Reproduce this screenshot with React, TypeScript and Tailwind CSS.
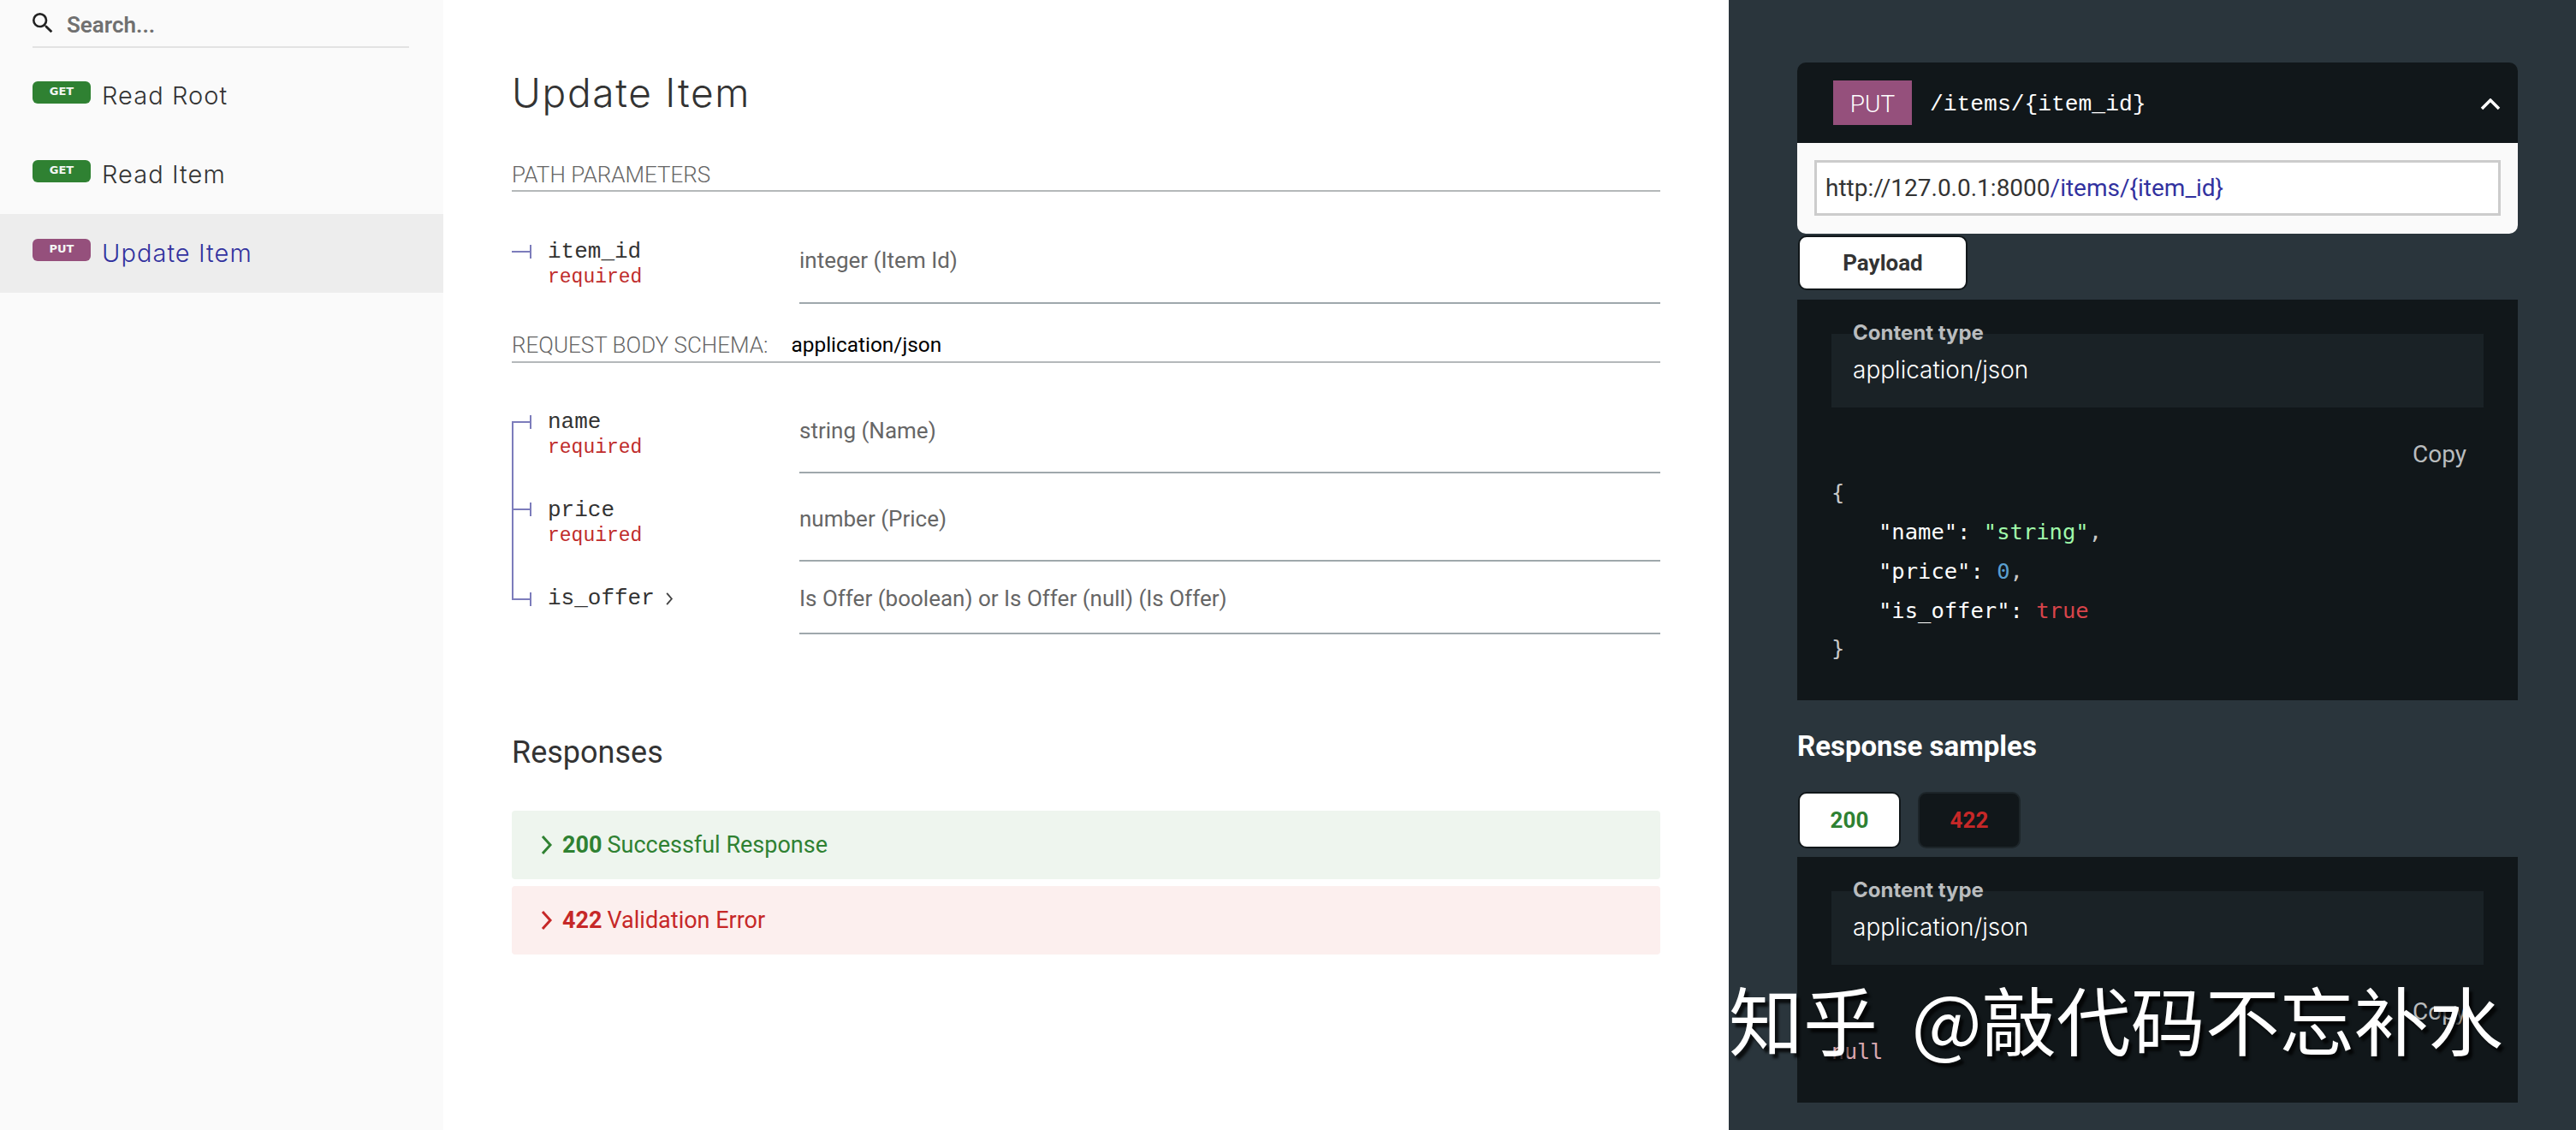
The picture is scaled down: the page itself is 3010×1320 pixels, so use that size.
const SANS = 'font-["Roboto",sans-serif]';

const NavItem = ({ method, label, active }: { method: string; label: string; active?: boolean }) => (
  <div className={`flex h-[92px] items-center pl-[38px] ${active ? 'bg-[#ededed]' : ''}`}>
    <span
      className={`mb-[8px] flex h-[26px] w-[68px] items-center justify-center rounded-[6px] pb-[2px] font-["DejaVu_Sans",sans-serif] text-[13px] font-bold text-[#f4f7f4] ${
        method === 'PUT' ? 'bg-[#95507c]' : 'bg-[#2f8132]'
      }`}
    >
      {method}
    </span>
    <span
      className={`ml-[13px] font-["Inter",sans-serif] text-[29px] font-light tracking-[1.05px] ${
        active ? 'text-[#32329f]' : 'text-[#333333]'
      }`}
    >
      {label}
    </span>
  </div>
);

const Sidebar = () => (
  <aside className="flex h-full w-[518px] shrink-0 flex-col bg-[#fafafa]">
    <div className="ml-[38px] mr-[40px] flex h-[56px] items-center border-b-2 border-[#e2e2e2]">
      <svg viewBox="0 0 24 24" className="h-[32px] w-[32px] shrink-0 -translate-x-[4px] fill-[#222222]">
        <path d="M15.5 14h-.79l-.28-.27A6.471 6.471 0 0 0 16 9.5 6.5 6.5 0 1 0 9.5 16c1.61 0 3.09-.59 4.23-1.57l.27.28v.79l5 4.99L20.49 19l-4.99-5zm-6 0C7.01 14 5 11.99 5 9.5S7.01 5 9.5 5 14 7.01 14 9.5 11.99 14 9.5 14z" />
      </svg>
      <span className={`ml-[8px] mt-[4px] ${SANS} text-[26px] font-semibold text-[#707070]`}>Search...</span>
    </div>
    <div className="mt-[10px]">
      <NavItem method="GET" label="Read Root" />
      <NavItem method="GET" label="Read Item" />
      <NavItem method="PUT" label="Update Item" active />
    </div>
  </aside>
);

type Tree = 'single' | 'first' | 'middle' | 'last';

const Connector = ({ tree, lineY }: { tree: Tree; lineY: number }) => (
  <>
    {tree !== 'single' && (
      <span
        className="absolute left-0 w-[2px] bg-[#7c7cbb]"
        style={{
          top: tree === 'first' ? lineY : 0,
          height: tree === 'middle' ? '100%' : tree === 'last' ? lineY + 2 : undefined,
          bottom: tree === 'first' ? -2 : undefined,
        }}
      />
    )}
    <span className="absolute left-0 h-[2px] w-[22px] bg-[#7c7cbb]" style={{ top: lineY }} />
    <span className="absolute left-[21px] h-[16px] w-[2px] bg-[#7c7cbb]" style={{ top: lineY - 7 }} />
  </>
);

const FieldRow = ({
  name,
  desc,
  required,
  tree,
  lineY,
  height,
  expandable,
}: {
  name: string;
  desc: string;
  required?: boolean;
  tree: Tree;
  lineY: number;
  height: number;
  expandable?: boolean;
}) => (
  <div className="flex" style={{ height }}>
    <div className="relative w-[336px] shrink-0 pl-[42px] pt-[28px] font-['Liberation_Mono',monospace]">
      <Connector tree={tree} lineY={lineY} />
      <div className="flex h-[30px] items-center text-[26px] leading-[30px] text-[#333333]">
        {name}
        {expandable && (
          <svg viewBox="0 0 10 18" className="ml-[12px] h-[17px] w-[10px] fill-none stroke-[#444444] stroke-[2]">
            <path d="M2 2l6 7-6 7" />
          </svg>
        )}
      </div>
      {required && <div className="h-[30px] text-[23px] leading-[30px] text-[#bf2b2b]">required</div>}
    </div>
    <div className={`flex-1 border-b-2 border-[#9fa8ac] ${SANS} text-[26px] leading-[30px] text-[#666666] ${expandable ? 'pt-[28px]' : 'pt-[38px]'}`}>
      {desc}
    </div>
  </div>
);

const ResponseRow = ({ code, text, tone }: { code: string; text: string; tone: 'ok' | 'err' }) => (
  <div
    className={`flex h-[80px] items-center rounded-[4px] pl-[34px] ${SANS} text-[27px] ${
      tone === 'ok' ? 'bg-[#eef5ee] text-[#2f8132]' : 'bg-[#fcefee] text-[#c62828]'
    }`}
  >
    <svg viewBox="0 0 14 24" className="mr-[11px] h-[24px] w-[14px] fill-none stroke-current stroke-[3]">
      <path d="M2 2l9 10-9 10" />
    </svg>
    <span className="font-bold">{code}</span>
    <span className="ml-[6px]">{text}</span>
  </div>
);

const Main = () => (
  <main className="h-full flex-1 pl-[80px] pr-[80px] pt-[81px]">
    <h1 className='h-[54px] font-["Inter",sans-serif] text-[46px] font-light leading-[54px] tracking-[1.7px] text-[#333333]'>Update Item</h1>
    <div className={`mt-[52px] flex h-[37px] items-start border-b-2 border-[#b4b8ba] pt-[2px] ${SANS} text-[26px] font-light leading-[30px] text-[#666666]`}>
      PATH PARAMETERS
    </div>
    <div className="mt-[27px]">
      <FieldRow name="item_id" desc="integer (Item Id)" required tree="single" lineY={42} height={104} />
    </div>
    <div className={`mt-[33px] flex h-[36px] items-start border-b-2 border-[#b4b8ba] ${SANS} text-[26px] leading-[30px]`}>
      <span className="font-light text-[#666666]">REQUEST BODY SCHEMA:</span>
      <span className="ml-[27px] text-[24.4px] text-black">application/json</span>
    </div>
    <div className="mt-[26px]">
      <FieldRow name="name" desc="string (Name)" required tree="first" lineY={42} height={103} />
      <FieldRow name="price" desc="number (Price)" required tree="middle" lineY={41} height={103} />
      <FieldRow name="is_offer" desc="Is Offer (boolean) or Is Offer (null) (Is Offer)" tree="last" lineY={43} height={85} expandable />
    </div>
    <h2 className={`mt-[118px] h-[40px] ${SANS} text-[36px] leading-[40px] text-[#333333]`}>Responses</h2>
    <div className="mt-[48px] flex flex-col gap-[8px]">
      <ResponseRow code="200" text="Successful Response" tone="ok" />
      <ResponseRow code="422" text="Validation Error" tone="err" />
    </div>
  </main>
);

const ContentType = () => (
  <div className="relative mx-[40px] h-[86px] bg-[#1a2226] pl-[25px] pt-[26px]">
    <span className='absolute left-[25px] top-[-15px] font-["Inter",sans-serif] text-[24px] font-bold leading-[28px] text-[#b9bcbe]'>
      Content type
    </span>
    <span className='font-["Inter",sans-serif] text-[28px] font-light leading-[32px] text-white'>application/json</span>
  </div>
);

const Right = () => (
  <section className="h-full w-[990px] shrink-0 bg-[#2a353c] pl-[80px] pr-[68px] pt-[73px]">
    <div className="overflow-hidden rounded-[10px]">
      <div className="flex h-[94px] items-center bg-[#11171a] pl-[42px] pr-[20px]">
        <span className={`flex h-[52px] w-[92px] items-center justify-center bg-[#95507c] pt-[3px] ${SANS} text-[28px] font-light text-white`}>
          PUT
        </span>
        <span className="ml-[21px] mt-[5px] font-['Liberation_Mono',monospace] text-[26.3px] text-white">/items/{'{item_id}'}</span>
        <svg viewBox="0 0 24 14" className="ml-auto mt-[3px] h-[14px] w-[24px] fill-none stroke-white stroke-[3.5]">
          <path d="M2 12l10-10 10 10" />
        </svg>
      </div>
      <div className="h-[106px] bg-[#fafafa] px-[20px] pt-[20px]">
        <div className={`flex h-[65px] items-center border-[3px] border-[#cccccc] bg-white pl-[10px] ${SANS} text-[28px] text-[#333333]`}>
          http://127.0.0.1:8000<span className="text-[#32329f]">/items/{'{item_id}'}</span>
        </div>
      </div>
    </div>
    <div className={`ml-[1px] mt-[2px] flex h-[64px] w-[198px] items-center justify-center rounded-[10px] border-2 border-[#11171a] bg-white ${SANS} text-[26px] font-bold text-[#333333]`}>
      Payload
    </div>
    <div className="mt-[11px] h-[468px] bg-[#11171a] pt-[40px]">
      <ContentType />
      <div className="mx-[40px] flex justify-end pr-[20px] pt-[37px]">
        <span className={`${SANS} text-[28px] leading-[36px] text-[#b9bcbe]`}>Copy</span>
      </div>
      <pre className="mx-[40px] mt-[3px] font-['DejaVu_Sans_Mono',monospace] text-[25.5px] leading-[46px] text-white">
        <div className="text-[#c8c8c8]">{'{'}</div>
        <div className="pl-[55px]">
          "name": <span className="text-[#a0fbaa]">"string"</span>
          <span className="text-[#c8c8c8]">,</span>
        </div>
        <div className="pl-[55px]">
          "price": <span className="text-[#5a9fd0]">0</span>
          <span className="text-[#c8c8c8]">,</span>
        </div>
        <div className="pl-[55px]">
          "is_offer": <span className="text-[#d9444a]">true</span>
        </div>
        <div className="-mt-[2px] text-[#c8c8c8]">{'}'}</div>
      </pre>
    </div>
    <h3 className={`mt-[35px] h-[38px] ${SANS} text-[33px] font-bold leading-[38px] text-white`}>Response samples</h3>
    <div className="ml-[1px] mt-[34px] flex gap-[20px]">
      <div className={`flex h-[66px] w-[120px] items-center justify-center rounded-[10px] border-2 border-[#11171a] bg-white ${SANS} text-[26px] font-bold text-[#2f8132]`}>
        200
      </div>
      <div className={`flex h-[66px] w-[120px] items-center justify-center rounded-[10px] border-2 border-[#1d2529] bg-[#11171a] ${SANS} text-[26px] font-bold text-[#c62828]`}>
        422
      </div>
    </div>
    <div className="mt-[10px] h-[287px] bg-[#11171a] pt-[40px]">
      <ContentType />
      <div className="mx-[40px] flex justify-end pr-[20px] pt-[37px]">
        <span className={`${SANS} text-[28px] leading-[36px] text-[#b9bcbe]`}>Copy</span>
      </div>
      <div className="mx-[40px] mt-[6px] font-['DejaVu_Sans_Mono',monospace] text-[25px] leading-[46px] text-[#d9a8b0]">null</div>
    </div>
  </section>
);

const App = () => (
  <div className="relative flex h-[1320px] w-[3010px] overflow-hidden bg-white">
    <Sidebar />
    <Main />
    <Right />
    {/* site watermark over the corner of the console panel */}
    <div className="absolute left-[2020px] top-[1134px] whitespace-nowrap font-['Noto_Sans_CJK_SC',sans-serif] text-[87px] leading-[110px] text-white [word-spacing:20px] [text-shadow:4px_5px_3px_rgba(0,0,0,0.75)]">
      知乎 @敲代码不忘补水
    </div>
  </div>
);

export default App;
